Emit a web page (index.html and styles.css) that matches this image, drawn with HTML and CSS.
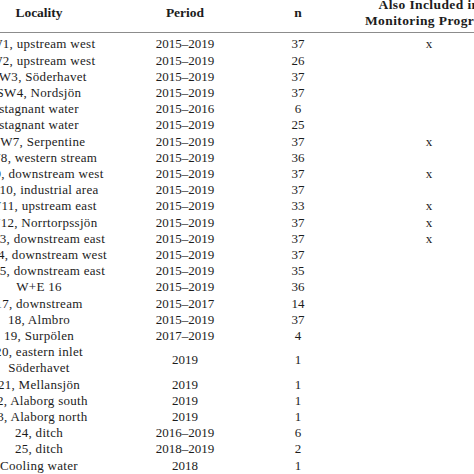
FILE: index.html
```html
<!DOCTYPE html>
<html lang="en">
<head>
    <meta charset="UTF-8">
    <meta name="viewport" content="width=device-width, initial-scale=1.0">
    <title>Sampling localities</title>
    <link rel="stylesheet" href="styles.css">
</head>
<body>
    <table class="sites">
        <colgroup>
            <col class="col-locality">
            <col class="col-period">
            <col class="col-n">
            <col class="col-also">
        </colgroup>
        <thead>
            <tr>
                <th>Locality</th>
                <th>Period</th>
                <th>n</th>
                <th class="wide">Also Included in<br>Monitoring Program</th>
            </tr>
        </thead>
        <tbody>
            <tr><td>SW1, upstream west</td><td>2015–2019</td><td>37</td><td>x</td></tr>
            <tr><td>SW2, upstream west</td><td>2015–2019</td><td>26</td><td></td></tr>
            <tr><td>SW3, Söderhavet</td><td>2015–2019</td><td>37</td><td></td></tr>
            <tr><td>SW4, Nordsjön</td><td>2015–2019</td><td>37</td><td></td></tr>
            <tr><td>stagnant water</td><td>2015–2016</td><td>6</td><td></td></tr>
            <tr><td>stagnant water</td><td>2015–2019</td><td>25</td><td></td></tr>
            <tr><td>SW7, Serpentine</td><td>2015–2019</td><td>37</td><td>x</td></tr>
            <tr><td>SW8, western stream</td><td>2015–2019</td><td>36</td><td></td></tr>
            <tr><td>SW9, downstream west</td><td>2015–2019</td><td>37</td><td>x</td></tr>
            <tr><td>SW10, industrial area</td><td>2015–2019</td><td>37</td><td></td></tr>
            <tr><td>SW11, upstream east</td><td>2015–2019</td><td>33</td><td>x</td></tr>
            <tr><td>SW12, Norrtorpssjön</td><td>2015–2019</td><td>37</td><td>x</td></tr>
            <tr><td>SW13, downstream east</td><td>2015–2019</td><td>37</td><td>x</td></tr>
            <tr><td>SW14, downstream west</td><td>2015–2019</td><td>37</td><td></td></tr>
            <tr><td>SW15, downstream east</td><td>2015–2019</td><td>35</td><td></td></tr>
            <tr><td>W+E 16</td><td>2015–2019</td><td>36</td><td></td></tr>
            <tr><td>17, downstream</td><td>2015–2017</td><td>14</td><td></td></tr>
            <tr><td>18, Almbro</td><td>2015–2019</td><td>37</td><td></td></tr>
            <tr><td>19, Surpölen</td><td>2017–2019</td><td>4</td><td></td></tr>
            <tr><td>20, eastern inlet<br>Söderhavet</td><td>2019</td><td>1</td><td></td></tr>
            <tr><td>21, Mellansjön</td><td>2019</td><td>1</td><td></td></tr>
            <tr><td>22, Alaborg south</td><td>2019</td><td>1</td><td></td></tr>
            <tr><td>23, Alaborg north</td><td>2019</td><td>1</td><td></td></tr>
            <tr><td>24, ditch</td><td>2016–2019</td><td>6</td><td></td></tr>
            <tr><td>25, ditch</td><td>2018–2019</td><td>2</td><td></td></tr>
            <tr><td>Cooling water</td><td>2018</td><td>1</td><td></td></tr>
        </tbody>
    </table>
</body>
</html>
```

FILE: styles.css
```css
body {
    margin: 0;
    padding: 0;
    background: #fff;
    color: #1c1c1c;
    font-family: "Liberation Serif", "Times New Roman", serif;
    overflow: hidden;
}
.sites {
    table-layout: fixed;
    width: 554px;
    margin-top: -3px;
    margin-left: -52px;
    border-collapse: collapse;
    font-size: 13px;
}
.col-locality { width: 182px; }
.col-period { width: 110px; }
.col-n { width: 116px; }
.col-also { width: 146px; }
.sites th {
    font-size: 13.5px;
    font-weight: bold;
    line-height: 16px;
    padding: 0 0 3px 0;
    text-align: center;
    vertical-align: middle;
    white-space: nowrap;
    border-bottom: 1.5px solid #8c8c8c;
}
.sites th.wide {
    letter-spacing: 0.4px;
}
.sites td {
    padding: 0;
    line-height: 16.2px;
    text-align: center;
    vertical-align: middle;
    white-space: nowrap;
}
.sites td:first-child {
    letter-spacing: 0.3px;
}
.sites tbody tr:first-child td {
    padding-top: 3.4px;
}
```
